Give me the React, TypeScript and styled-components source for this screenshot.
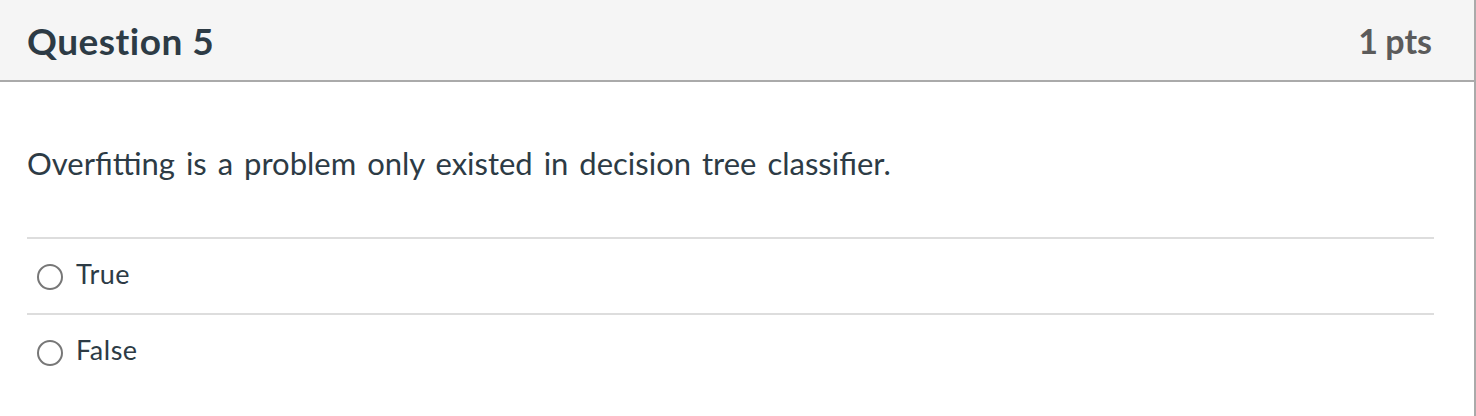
import React from "react";
import styled, { createGlobalStyle } from "styled-components";

const Global = createGlobalStyle`
  html, body { margin: 0; padding: 0; background: #fff; }
  body { font-family: Lato, "Open Sans", sans-serif; color: #2d3b45; }
`;

const Panel = styled.div`
  width: 1474px;
  min-height: 416px;
  border-right: 2px solid #aaaaaa;
  background: #fff;
`;

const Header = styled.div`
  height: 80px;
  background: #f5f5f5;
  border-bottom: 2px solid #aaaaaa;
  display: flex;
  align-items: center;
  justify-content: space-between;
  padding: 0 42px 0 27px;
`;

const Title = styled.h2`
  margin: 0;
  font-size: 37px;
  font-weight: 700;
  color: #2d3b45;
  letter-spacing: 0.5px;
`;

const Points = styled.div`
  font-size: 34px;
  font-weight: 700;
  color: #5b5b5b;
  word-spacing: -1px;
`;

const Body = styled.div`
  padding: 60px 40px 0 27px;
`;

const QuestionText = styled.p`
  margin: 0 0 53px;
  font-size: 31px;
  line-height: 42px;
  word-spacing: 3px;
  font-variant-ligatures: common-ligatures;
  color: #2d3b45;
`;

const Option = styled.label`
  display: flex;
  align-items: center;
  height: 74px;
  border-top: 2px solid #dddddd;
  padding-left: 10px;
  gap: 13px;
  font-size: 27px;
  letter-spacing: 0.5px;
  color: #2d3b45;
`;

const Radio = styled.span`
  width: 22px;
  height: 22px;
  border: 2px solid #777777;
  border-radius: 50%;
  flex: none;
  margin-top: 2px;
`;

const OptionText = styled.span`
  line-height: 30px;
  margin-bottom: 4px;
`;

const options = ["True", "False"];

export default function App() {
  return (
    <>
      <Global />
      <Panel>
        <Header>
          <Title>Question 5</Title>
          <Points>1 pts</Points>
        </Header>
        <Body>
          <QuestionText>
            Overfitting is a problem only existed in decision tree classifier.
          </QuestionText>
          {options.map((o) => (
            <Option key={o}>
              <Radio />
              <OptionText>{o}</OptionText>
            </Option>
          ))}
        </Body>
      </Panel>
    </>
  );
}
